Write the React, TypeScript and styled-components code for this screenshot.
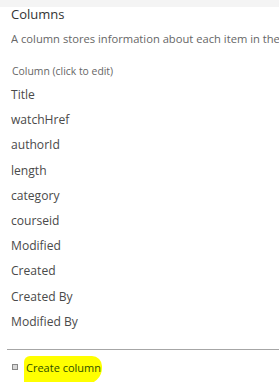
import styled, { createGlobalStyle } from "styled-components";

const GlobalStyle = createGlobalStyle`
  html, body {
    margin: 0;
    padding: 0;
    background: #ffffff;
    overflow: hidden;
  }
  body {
    font-family: "Open Sans", "Noto Sans", sans-serif;
  }
`;

const Page = styled.div`
  width: 279px;
  height: 382px;
  overflow: hidden;
  display: flex;
  flex-direction: column;
`;

const TopBand = styled.div`
  height: 7px;
  background: #f4f4f4;
  flex-shrink: 0;
`;

const Section = styled.div`
  padding: 0 0 0 11px;
`;

const Heading = styled.h2`
  margin: -2px 0 0;
  font-size: 13px;
  font-weight: 400;
  color: #333333;
  line-height: 18px;
`;

const Description = styled.p`
  margin: 8px 0 0;
  font-size: 11.2px;
  color: #666666;
  line-height: 16px;
  white-space: nowrap;
  overflow: hidden;
`;

const ListHeader = styled.div`
  margin: 17px 0 0 1px;
  font-size: 10.4px;
  color: #666666;
  line-height: 14px;
`;

const List = styled.ul`
  list-style: none;
  margin: 4px 0 0;
  padding: 0;
  display: flex;
  flex-direction: column;
`;

const Item = styled.li`
  height: 25.2px;
  display: flex;
  align-items: center;
  font-size: 12.1px;
  color: #4a4a4a;
`;

const Divider = styled.hr`
  margin: 15px 0 0 7px;
  border: 0;
  border-top: 1px solid #a6a6a6;
`;

const Footer = styled.div`
  display: flex;
  align-items: center;
  gap: 6px;
  padding: 6px 0 0 12px;
`;

const Bullet = styled.span`
  width: 4px;
  height: 4px;
  border: 1px solid #888888;
  background: #d8d8d8;
  margin-top: -6px;
`;

const Highlight = styled.span`
  background: #ffff00;
  font-size: 11px;
  color: #2e4d00;
  padding: 5px 1px 9px 2px;
  border-radius: 6px 10px 16px 3px;
  line-height: 14px;
`;

const columns = [
  "Title",
  "watchHref",
  "authorId",
  "length",
  "category",
  "courseid",
  "Modified",
  "Created",
  "Created By",
  "Modified By",
];

const App = () => (
  <>
    <GlobalStyle />
    <Page>
      <TopBand />
      <Section>
        <Heading>Columns</Heading>
        <Description>
          A column stores information about each item in the list.
        </Description>
        <ListHeader>Column (click to edit)</ListHeader>
        <List>
          {columns.map((c) => (
            <Item key={c}>{c}</Item>
          ))}
        </List>
      </Section>
      <Divider />
      <Footer>
        <Bullet />
        <Highlight>Create column</Highlight>
      </Footer>
    </Page>
  </>
);

export default App;
